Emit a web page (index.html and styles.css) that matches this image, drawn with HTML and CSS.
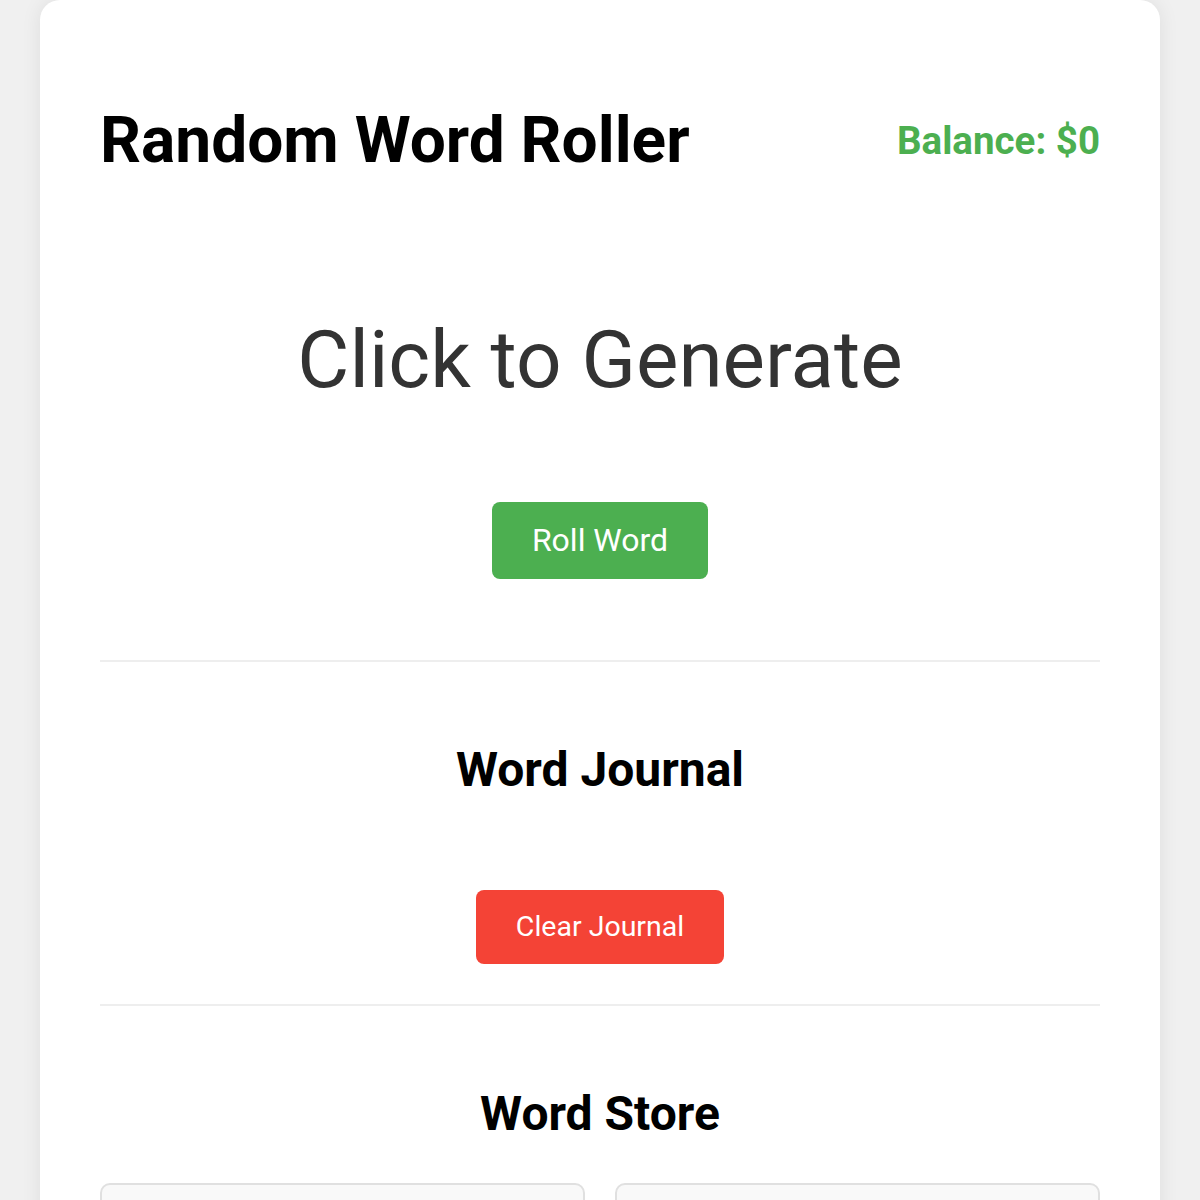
FILE: index.html
```html
<!DOCTYPE html>
<html lang="en">
<head>
<meta charset="utf-8">
<title>Random Word Roller</title>
<link rel="stylesheet" href="styles.css">
</head>
<body>
<div class="container">
  <header class="header">
    <h1 class="title">Random Word Roller</h1>
    <div class="balance">Balance: $0</div>
  </header>
  <section class="roller">
    <div class="word-display">Click to Generate</div>
    <button class="btn btn-roll">Roll Word</button>
  </section>
  <section class="section journal">
    <h2 class="section-title">Word Journal</h2>
    <div class="journal-list"></div>
    <button class="btn btn-clear">Clear Journal</button>
  </section>
  <section class="section store">
    <h2 class="section-title">Word Store</h2>
    <div class="store-grid">
      <div class="store-item"></div>
      <div class="store-item"></div>
    </div>
  </section>
</div>
</body>
</html>
```
FILE: styles.css
```css
html, body {
  margin: 0;
  padding: 0;
}
body {
  background: #f0f0f0;
  font-family: Roboto, "Liberation Sans", sans-serif;
}
.container {
  margin: 0 40px;
  background: #ffffff;
  border-radius: 20px;
  padding: 102px 60px 60px;
  box-shadow: 0 0 20px rgba(0, 0, 0, 0.08);
  min-height: 1300px;
}
.header {
  display: flex;
  justify-content: space-between;
  align-items: center;
}
.title {
  margin: 0;
  font-size: 64px;
  line-height: 77px;
  font-weight: 700;
  color: #000;
}
.balance {
  font-size: 38.5px;
  font-weight: 700;
  color: #4caf50;
}
.roller {
  display: flex;
  flex-direction: column;
  align-items: center;
  padding-bottom: 81px;
}
.word-display {
  margin-top: 134px;
  font-size: 80px;
  line-height: 94px;
  color: #333333;
}
.btn {
  border: none;
  border-radius: 8px;
  color: #ffffff;
  font-family: Roboto, "Liberation Sans", sans-serif;
  cursor: pointer;
}
.btn-roll {
  margin-top: 95px;
  background: #4caf50;
  font-size: 32px;
  line-height: 37px;
  padding: 20px 40px;
}
.section {
  border-top: 2px solid #eeeeee;
  display: flex;
  flex-direction: column;
  align-items: center;
}
.section-title {
  margin: 80px 0 0;
  font-size: 48px;
  line-height: 56px;
  font-weight: 700;
  color: #000;
}
.journal {
  padding-bottom: 40px;
}
.btn-clear {
  margin-top: 92px;
  background: #f44336;
  font-size: 28.5px;
  line-height: 34px;
  padding: 20px 40px;
}
.store-grid {
  margin-top: 41px;
  width: 100%;
  display: grid;
  grid-template-columns: 1fr 1fr;
  gap: 30px;
}
.store-item {
  height: 220px;
  background: #f9f9f9;
  border: 2px solid #e0e0e0;
  border-radius: 10px;
}
```
